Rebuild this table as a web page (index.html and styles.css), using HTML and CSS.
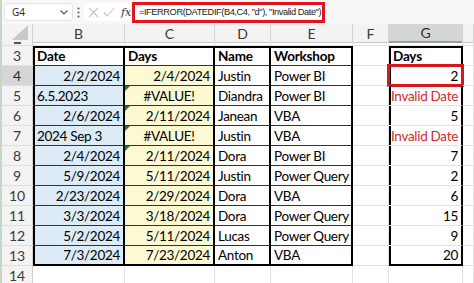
FILE: index.html
```html
<!DOCTYPE html>
<html>
<head>
<meta charset="utf-8">
<link rel="stylesheet" href="styles.css">
</head>
<body>
<div class="app">
  <div class="edge"></div>
  <div class="main">
    <div class="fbar">
      <div class="namebox">
        <span>G4</span>
        <svg class="chev" width="8" height="5" viewBox="0 0 8 5"><path d="M0.5 0.5 L4 4 L7.5 0.5" fill="none" stroke="#555" stroke-width="1.1"/></svg>
      </div>
      <svg class="dots" width="3" height="11" viewBox="0 0 3 11"><circle cx="1.5" cy="1.5" r="1.1" fill="#666"/><circle cx="1.5" cy="5.5" r="1.1" fill="#666"/><circle cx="1.5" cy="9.5" r="1.1" fill="#666"/></svg>
      <div class="fx-icons">
        <svg width="11" height="11" viewBox="0 0 11 11"><path d="M1 1 L10 10 M10 1 L1 10" stroke="#c4c4c4" stroke-width="1.1"/></svg>
        <svg width="12" height="10" viewBox="0 0 12 10"><path d="M1 5.5 L4.3 9 L11 1" fill="none" stroke="#c4c4c4" stroke-width="1.1"/></svg>
        <span class="fx">fx</span>
      </div>
      <div class="formula">=IFERROR(DATEDIF(B4,C4, "d"), "Invalid Date")</div>
    </div>

    <div class="sheet">
      <div class="row colhdr">
        <div class="corner"><svg width="16" height="15" viewBox="0 0 16 15"><path d="M16 0 L16 15 L0 15 Z" fill="#c9c9c9"/></svg></div>
        <div class="ch">B</div><div class="ch">C</div><div class="ch">D</div><div class="ch">E</div><div class="ch">F</div><div class="ch sel">G</div><div class="ch"></div>
      </div>

      <div class="row sliver">
        <div class="rh"><span class="dash"></span></div>
        <div class="c"></div><div class="c"></div><div class="c"></div><div class="c"></div><div class="c"></div><div class="c"></div><div class="c"></div>
      </div>

      <div class="row t first">
        <div class="rh">3</div>
        <div class="c b hd">Date</div><div class="c cc hd">Days</div><div class="c d hd">Name</div><div class="c e hd">Workshop</div><div class="c"></div><div class="c g g3 hd">Days</div><div class="c"></div>
      </div>
      <div class="row t">
        <div class="rh rsel">4</div>
        <div class="c b blue r">2/2/2024</div><div class="c cc yel r">2/4/2024</div><div class="c d">Justin</div><div class="c e">Power BI</div><div class="c"></div><div class="c g r active">2</div><div class="c"></div>
      </div>
      <div class="row t">
        <div class="rh">5</div>
        <div class="c b blue">6.5.2023</div><div class="c cc yel m tri">#VALUE!</div><div class="c d">Diandra</div><div class="c e">Power BI</div><div class="c"></div><div class="c g r err">Invalid Date</div><div class="c"></div>
      </div>
      <div class="row t">
        <div class="rh">6</div>
        <div class="c b blue r">2/6/2024</div><div class="c cc yel r tri">2/11/2024</div><div class="c d">Janean</div><div class="c e">VBA</div><div class="c"></div><div class="c g r">5</div><div class="c"></div>
      </div>
      <div class="row t">
        <div class="rh">7</div>
        <div class="c b blue">2024 Sep 3</div><div class="c cc yel m tri">#VALUE!</div><div class="c d">Justin</div><div class="c e">VBA</div><div class="c"></div><div class="c g r err">Invalid Date</div><div class="c"></div>
      </div>
      <div class="row t">
        <div class="rh">8</div>
        <div class="c b blue r">2/4/2024</div><div class="c cc yel r tri">2/11/2024</div><div class="c d">Dora</div><div class="c e">Power BI</div><div class="c"></div><div class="c g r">7</div><div class="c"></div>
      </div>
      <div class="row t">
        <div class="rh">9</div>
        <div class="c b blue r">5/9/2024</div><div class="c cc yel r">5/11/2024</div><div class="c d">Justin</div><div class="c e">Power Query</div><div class="c"></div><div class="c g r">2</div><div class="c"></div>
      </div>
      <div class="row t">
        <div class="rh">10</div>
        <div class="c b blue r">2/23/2024</div><div class="c cc yel r">2/29/2024</div><div class="c d">Dora</div><div class="c e">VBA</div><div class="c"></div><div class="c g r">6</div><div class="c"></div>
      </div>
      <div class="row t">
        <div class="rh">11</div>
        <div class="c b blue r">3/3/2024</div><div class="c cc yel r">3/18/2024</div><div class="c d">Dora</div><div class="c e">Power Query</div><div class="c"></div><div class="c g r">15</div><div class="c"></div>
      </div>
      <div class="row t">
        <div class="rh">12</div>
        <div class="c b blue r">5/2/2024</div><div class="c cc yel r">5/11/2024</div><div class="c d">Lucas</div><div class="c e">Power Query</div><div class="c"></div><div class="c g r">9</div><div class="c"></div>
      </div>
      <div class="row t last">
        <div class="rh">13</div>
        <div class="c b blue r">7/3/2024</div><div class="c cc yel r">7/23/2024</div><div class="c d">Anton</div><div class="c e">VBA</div><div class="c"></div><div class="c g r">20</div><div class="c"></div>
      </div>
      <div class="row">
        <div class="rh">14</div>
        <div class="c"></div><div class="c"></div><div class="c"></div><div class="c"></div><div class="c"></div><div class="c"></div><div class="c"></div>
      </div>
    </div>
  </div>
</div>
</body>
</html>
```

FILE: styles.css
```css
* { box-sizing: border-box; }
html, body { margin: 0; padding: 0; }
body {
  width: 474px;
  height: 283px;
  overflow: hidden;
  background: #fff;
  font-family: Lato, "Liberation Sans", sans-serif;
  color: #000;
}
.app { display: flex; height: 283px; }
.edge { width: 2px; background: #c3d6c8; flex: none; }
.main { flex: 1; display: flex; flex-direction: column; min-width: 0; }

/* formula bar */
.fbar {
  height: 24px;
  flex: none;
  display: flex;
  align-items: center;
  background: #f7f7f7;
}
.namebox {
  margin-left: 2px;
  width: 69px;
  height: 18px;
  background: #fff;
  border: 1px solid #e2e2e2;
  border-radius: 3px;
  display: flex;
  align-items: center;
  justify-content: space-between;
  padding: 0 4px 0 7px;
  font-family: "Open Sans", sans-serif;
  font-size: 10px;
  color: #222;
}
.dots { margin-left: 4px; }
.fx-icons {
  margin-left: 4px;
  height: 18px;
  width: 48px;
  display: flex;
  align-items: center;
  gap: 4px;
  padding-left: 4px;
  background: #fff;
  border-radius: 3px 0 0 3px;
}
.fx {
  font-family: "DejaVu Serif", serif;
  font-style: italic;
  font-size: 11px;
  color: #333;
  margin-left: 2px;
}
.formula {
  width: 193px;
  height: 21px;
  border: 3px solid #e3141b;
  background: #fff;
  display: flex;
  align-items: center;
  padding-left: 4px;
  font-family: "Liberation Sans", sans-serif;
  font-size: 9.3px;
  letter-spacing: -0.45px;
  color: #222;
  white-space: nowrap;
  overflow: hidden;
}

/* sheet */
.sheet { flex: 1; display: flex; flex-direction: column; overflow: hidden; }
.row {
  display: grid;
  grid-template-columns: 31px 92px 90px 56px 82px 36px 74px 1fr;
  height: 20px;
  flex: none;
}
.colhdr { height: 18px; }
.corner {
  background: #f3f3f3;
  border-right: 1px solid #d0d0d0;
  border-bottom: 1px solid #c8c8c8;
  display: flex;
  align-items: flex-end;
  justify-content: flex-end;
  padding: 0 4px 2px 0;
}
.ch {
  background: #f3f3f3;
  border-right: 1px solid #d4d4d4;
  border-bottom: 1px solid #c8c8c8;
  display: flex;
  align-items: center;
  justify-content: center;
  font-size: 14px;
  color: #3a3a3a;
}
.ch.sel { background: #d6d6d6; border-bottom: 2px solid #8fa596; color: #2d2d2d; }

.sliver { height: 4px; overflow: hidden; }
.sliver .rh { align-items: flex-start; }
.dash { display: block; width: 7px; height: 1.5px; background: #555; margin-top: 0; }

.rh {
  background: #f3f3f3;
  border-right: 1px solid #cfcfcf;
  border-bottom: 1px solid #dedede;
  display: flex;
  align-items: center;
  justify-content: center;
  font-size: 14px;
  color: #3a3a3a;
}
.rh.rsel { background: #d6d6d6; color: #2a2a2a; }

.c {
  position: relative;
  border-right: 1px solid #e2e2e2;
  border-bottom: 1px solid #e2e2e2;
  display: flex;
  align-items: flex-end;
  padding: 0 3px 1px 3px;
  font-size: 13.5px;
  letter-spacing: -0.3px;
  line-height: 16px;
  white-space: nowrap;
}
.c.r { justify-content: flex-end; }
.c.m { justify-content: center; }
.c.hd { font-weight: bold; letter-spacing: -0.2px; }
.blue { background: #dcebf6; }
.yel { background: #fdf9d3; }

/* table B3:E13 borders */
.t .b, .t .cc, .t .d { border-right: 2px solid #000; border-bottom: 1px solid #333; }
.t .e { border-right: 2px solid #000; border-bottom: 1px solid #333; }
.t .b { box-shadow: inset 2px 0 0 #000; padding-left: 4px; }
.first .b, .first .cc, .first .d, .first .e { border-top: 2px solid #000; }
.last .b, .last .cc, .last .d, .last .e { border-bottom: 2px solid #000; }

/* G column */
.t .g { border-right: 2px solid #000; box-shadow: inset 2px 0 0 #000; padding-left: 4px; }
.first .g { border-top: 2px solid #000; border-bottom: 1px solid #000; }
.last .g { border-bottom: 2px solid #000; }
.err { color: #d22b2b; }
.active::after {
  content: "";
  position: absolute;
  left: -2px; top: -2px; right: -3px; bottom: -2px;
  border: 3px solid #d9161c;
}
.tri::before {
  content: "";
  position: absolute;
  left: 0; top: 0;
  border-top: 5px solid #1e7b3e;
  border-right: 5px solid transparent;
}
```
